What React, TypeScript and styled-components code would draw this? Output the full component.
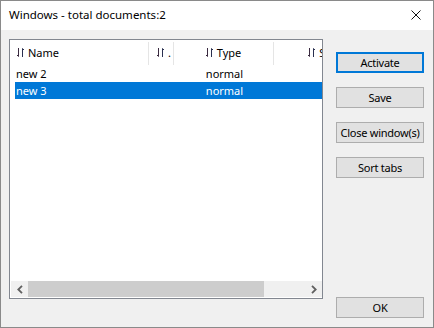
import React from "react";
import styled, { createGlobalStyle } from "styled-components";

const GlobalStyle = createGlobalStyle`
  html, body {
    margin: 0;
    padding: 0;
    background: #ffffff;
  }
  body {
    font-family: "Noto Sans", "Liberation Sans", sans-serif;
    font-size: 11px;
    color: #000000;
  }
`;

interface IColumn {
  label: string;
  width: number;
  align: "left" | "center";
  pad: number;
}

const COLUMNS: IColumn[] = [
  { label: "Name", width: 139, align: "left", pad: 7 },
  { label: ".", width: 25, align: "left", pad: 8 },
  { label: "Type", width: 100, align: "center", pad: 0 },
  { label: "Size", width: 100, align: "center", pad: 0 },
];

const ROWS = [
  { name: "new 2", type: "normal", selected: false },
  { name: "new 3", type: "normal", selected: true },
];

const BUTTONS = ["Activate", "Save", "Close window(s)", "Sort tabs"];

const SortIcon = () => (
  <svg width="7" height="9" viewBox="0 0 7 9" fill="none">
    <path d="M1.5 0 V8.5 M0 7 L1.5 8.5" stroke="#3a2a40" strokeWidth="1" />
    <path d="M5.5 0.5 V9 M5.5 0.5 L7 2" stroke="#2a3050" strokeWidth="1" />
  </svg>
);

export default function App() {
  return (
    <>
      <GlobalStyle />
      <Window>
        <TitleBar>
          <Title>Windows - total documents:2</Title>
          <CloseButton>
            <svg width="10" height="10" viewBox="0 0 10 10">
              <path d="M0.5 0.5 L9.5 9.5 M9.5 0.5 L0.5 9.5" stroke="#111" strokeWidth="1" />
            </svg>
          </CloseButton>
        </TitleBar>
        <Body>
          <ListBox>
            <ListContent>
              <Header>
                {COLUMNS.map((c, i) => (
                  <HeaderCell key={i} $width={c.width} $align={c.align} $pad={c.pad}>
                    <SortIcon />
                    <span>{c.label}</span>
                  </HeaderCell>
                ))}
              </Header>
              {ROWS.map((r) => (
                <Row key={r.name} $selected={r.selected}>
                  <NameCell>{r.name}</NameCell>
                  <Cell $width={25} />
                  <Cell $width={100} $center>
                    {r.type}
                  </Cell>
                </Row>
              ))}
            </ListContent>
            <HScroll>
              <ScrollArrow>
                <svg width="6" height="9" viewBox="0 0 6 9">
                  <path d="M5 0.8 L1.3 4.5 L5 8.2" stroke="#606060" strokeWidth="1.8" fill="none" />
                </svg>
              </ScrollArrow>
              <Track>
                <Thumb />
              </Track>
              <ScrollArrow>
                <svg width="6" height="9" viewBox="0 0 6 9">
                  <path d="M1 0.8 L4.7 4.5 L1 8.2" stroke="#606060" strokeWidth="1.8" fill="none" />
                </svg>
              </ScrollArrow>
            </HScroll>
          </ListBox>
          <Side>
            {BUTTONS.map((b, i) => (
              <Button key={b} $focused={i === 0}>
                {b}
              </Button>
            ))}
            <OkButton>OK</OkButton>
          </Side>
        </Body>
      </Window>
    </>
  );
}

const Window = styled.div`
  width: 434px;
  height: 328px;
  box-sizing: border-box;
  border: 1px solid #8a8a8a;
  display: flex;
  flex-direction: column;
  background: #f0f0f0;
`;

const TitleBar = styled.div`
  height: 29px;
  background: #ffffff;
  display: flex;
  align-items: center;
  justify-content: space-between;
  padding-left: 8px;
`;

const Title = styled.span`
  font-size: 11.5px;
  line-height: 16px;
  padding-bottom: 1px;
`;

const CloseButton = styled.div`
  width: 34px;
  height: 29px;
  display: flex;
  align-items: center;
  justify-content: center;
  padding-bottom: 2px;
  box-sizing: border-box;
`;

const Body = styled.div`
  flex: 1;
  display: flex;
  gap: 13px;
  padding: 9px 9px 9px 8px;
  min-height: 0;
`;

const ListBox = styled.div`
  width: 314px;
  height: 260px;
  box-sizing: border-box;
  border: 1px solid #828790;
  background: #ffffff;
  display: flex;
  flex-direction: column;
  overflow: hidden;
`;

const ListContent = styled.div`
  flex: 1;
  overflow: hidden;
`;

const Header = styled.div`
  height: 25px;
  display: flex;
  white-space: nowrap;
`;

const HeaderCell = styled.div<{ $width: number; $align: "left" | "center"; $pad: number }>`
  flex: 0 0 ${(p) => p.$width}px;
  box-sizing: border-box;
  margin-top: 2px;
  border-right: 1px solid #e5e5e5;
  display: flex;
  align-items: center;
  justify-content: ${(p) => (p.$align === "center" ? "center" : "flex-start")};
  padding-left: ${(p) => p.$pad}px;
  padding-bottom: 2px;
  gap: 4px;
  overflow: hidden;
  font-size: 11px;
  &:last-child {
    border-right: none;
  }
`;

const Row = styled.div<{ $selected: boolean }>`
  height: 17px;
  margin-left: 5px;
  display: flex;
  align-items: center;
  background: ${(p) => (p.$selected ? "#0078d7" : "transparent")};
  color: ${(p) => (p.$selected ? "#ffffff" : "#000000")};
  font-size: 11px;
  white-space: nowrap;
`;

const NameCell = styled.div`
  flex: 0 0 134px;
  padding-left: 1px;
  box-sizing: border-box;
`;

const Cell = styled.div<{ $width: number; $center?: boolean }>`
  flex: 0 0 ${(p) => p.$width}px;
  text-align: ${(p) => (p.$center ? "center" : "left")};
  box-sizing: border-box;
  padding-left: ${(p) => (p.$center ? 1 : 0)}px;
`;

const HScroll = styled.div`
  height: 16px;
  margin: 0 0 1px 1px;
  display: flex;
  background: #f0f0f0;
`;

const ScrollArrow = styled.div`
  flex: 0 0 17px;
  display: flex;
  align-items: center;
  justify-content: center;
`;

const Track = styled.div`
  flex: 1;
  display: flex;
`;

const Thumb = styled.div`
  width: 236px;
  background: #cdcdcd;
`;

const Side = styled.div`
  width: 88px;
  display: flex;
  flex-direction: column;
  gap: 14px;
  padding-top: 13px;
`;

const Button = styled.div<{ $focused?: boolean }>`
  height: 21px;
  box-sizing: border-box;
  background: #e1e1e1;
  border: ${(p) => (p.$focused ? "2px solid #0078d7" : "1px solid #adadad")};
  display: flex;
  align-items: center;
  justify-content: center;
  font-size: 11px;
  letter-spacing: -0.25px;
  white-space: nowrap;
`;

const OkButton = styled(Button)`
  margin-top: auto;
`;
